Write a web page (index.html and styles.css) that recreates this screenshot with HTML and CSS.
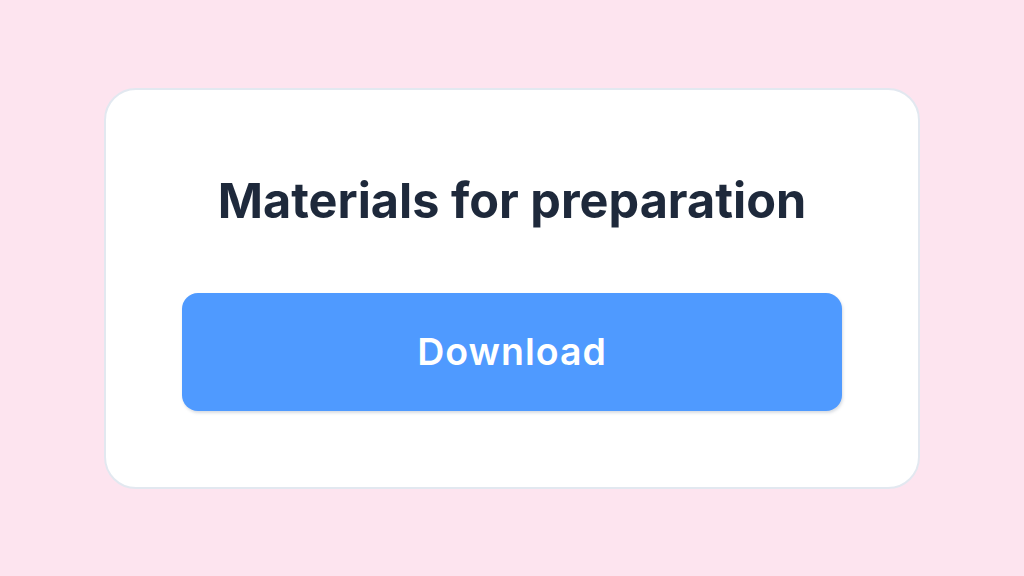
FILE: index.html
```html
<!DOCTYPE html>
<html lang="en">
<head>
    <meta charset="UTF-8">
    <meta name="viewport" content="width=device-width, initial-scale=1.0">
    <title>Materials</title>
    <link rel="stylesheet" href="styles.css">
</head>
<body>
    <div class="card">
        <h2 class="title">Materials for preparation</h2>
        <button class="download">Download</button>
    </div>
</body>
</html>
```

FILE: styles.css
```css
body {
    margin: 0;
    height: 576px;
    background: #fde4ef;
    font-family: Inter, "Noto Sans", sans-serif;
    display: flex;
    justify-content: center;
    align-items: center;
}
.card {
    width: 816px;
    box-sizing: border-box;
    background: #fff;
    border: 2px solid #e2e8f0;
    border-radius: 32px;
    padding: 81px 76px 76px;
    display: flex;
    flex-direction: column;
    align-items: center;
}
.title {
    margin: 0 0 63px;
    font-size: 48.6px;
    font-weight: 700;
    color: #1e293b;
}
.download {
    width: 100%;
    height: 118px;
    border: none;
    border-radius: 16px;
    background: #4f9aff;
    color: #fff;
    font-family: inherit;
    font-size: 37.5px;
    font-weight: 600;
    letter-spacing: 1px;
    box-shadow: 1px 2px 3px rgba(100, 116, 139, 0.25);
    cursor: pointer;
}
```
